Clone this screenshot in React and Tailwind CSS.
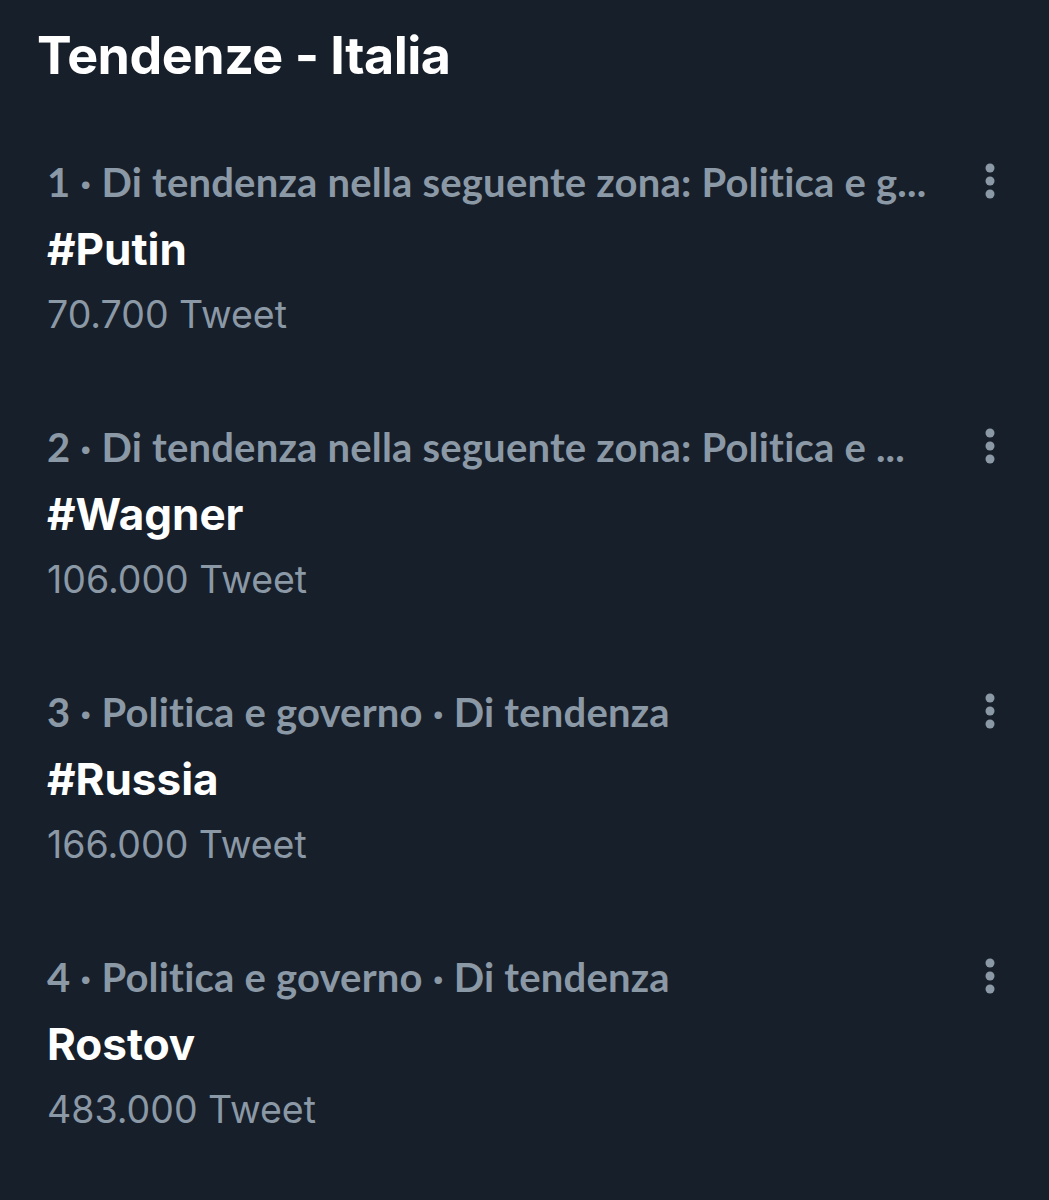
import React from 'react';

const trends = [
  { context: '1 · Di tendenza nella seguente zona: Politica e g...', name: '#Putin', count: '70.700 Tweet' },
  { context: '2 · Di tendenza nella seguente zona: Politica e ...', name: '#Wagner', count: '106.000 Tweet' },
  { context: '3 · Politica e governo · Di tendenza', name: '#Russia', count: '166.000 Tweet' },
  { context: '4 · Politica e governo · Di tendenza', name: 'Rostov', count: '483.000 Tweet' },
];

function MoreIcon() {
  return (
    <svg width="12" height="40" viewBox="0 0 12 40" className="fill-[#8b98a5]">
      <circle cx="6" cy="6" r="4.5" />
      <circle cx="6" cy="19" r="4.5" />
      <circle cx="6" cy="32" r="4.5" />
    </svg>
  );
}

function TrendRow({ trend }) {
  return (
    <div className="flex items-start justify-between pb-[66px]">
      <div className="flex flex-col">
        <div className="h-[66px] flex items-center text-[40px] font-bold text-[#8b98a5] font-['Lato','Liberation_Sans',sans-serif] tracking-[0.2px] whitespace-nowrap">
          {trend.context}
        </div>
        <div className="h-[67px] flex items-center text-[44px] font-bold text-white font-['Inter','Liberation_Sans',sans-serif]">
          {trend.name}
        </div>
        <div className="h-[66px] flex items-center text-[37.5px] text-[#8b98a5] font-['Inter','Liberation_Sans',sans-serif]">
          {trend.count}
        </div>
      </div>
      <div className="h-[66px] flex items-center pr-[53px]">
        <MoreIcon />
      </div>
    </div>
  );
}

export default function App() {
  return (
    <div className="w-[1049px] h-[1200px] bg-[#171f2a] overflow-hidden">
      <div className="pl-[37px] pt-[23px] h-[66px] flex items-center text-[52px] font-bold text-white font-['Inter','Liberation_Sans',sans-serif] tracking-[-0.5px] box-content">
        Tendenze - Italia
      </div>
      <div className="pl-[47px] pt-[60px]">
        {trends.map((t) => (
          <TrendRow key={t.name} trend={t} />
        ))}
      </div>
    </div>
  );
}
